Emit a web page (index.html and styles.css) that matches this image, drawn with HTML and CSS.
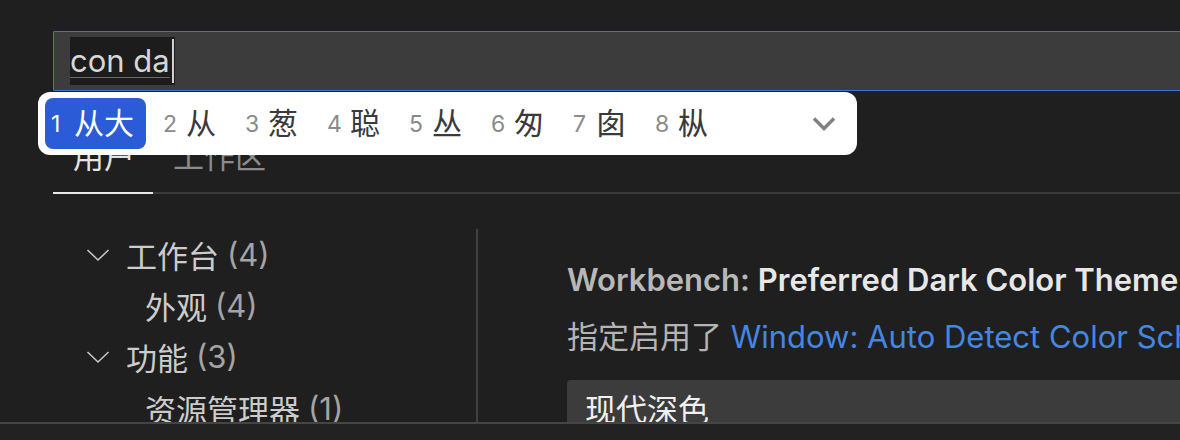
FILE: index.html
```html
<!DOCTYPE html>
<html lang="zh-CN">
<head>
<meta charset="utf-8">
<title>设置</title>
<link rel="stylesheet" href="styles.css">
</head>
<body>
<div class="page">
  <div class="search">
    <span class="preedit"><span class="preedit-text">con da</span><span class="caret"></span></span>
  </div>
  <div class="tabs">
    <div class="tab active">用户</div>
    <div class="tab">工作区</div>
  </div>
  <div class="main">
    <div class="tree">
      <div class="row"><svg class="twisty" width="24" height="24" viewBox="0 0 24 24"><polyline points="1.5,7 12,17 22.5,7" fill="none" stroke="#c5c5c5" stroke-width="1.6"/></svg><span class="label">工作台</span><span class="count">(4)</span></div>
      <div class="row sub"><span class="label">外观</span><span class="count">(4)</span></div>
      <div class="row"><svg class="twisty" width="24" height="24" viewBox="0 0 24 24"><polyline points="1.5,7 12,17 22.5,7" fill="none" stroke="#c5c5c5" stroke-width="1.6"/></svg><span class="label">功能</span><span class="count">(3)</span></div>
      <div class="row sub"><span class="label">资源管理器</span><span class="count">(1)</span></div>
    </div>
    <div class="divider"></div>
    <div class="content">
      <div class="setting-title"><span class="category">Workbench: </span>Preferred Dark Color Theme</div>
      <div class="setting-desc">指定启用了 <span class="link">Window: Auto Detect Color Scheme</span> 时首选的深色主题。</div>
      <div class="dropdown">现代深色</div>
    </div>
  </div>
</div>
<div class="footer"></div>

<div class="ime">
  <div class="cand selected"><span class="num">1</span><span class="chars">从大</span></div>
  <div class="cand"><span class="num">2</span><span class="chars">从</span></div>
  <div class="cand"><span class="num">3</span><span class="chars">葱</span></div>
  <div class="cand"><span class="num">4</span><span class="chars">聪</span></div>
  <div class="cand"><span class="num">5</span><span class="chars">丛</span></div>
  <div class="cand"><span class="num">6</span><span class="chars">匆</span></div>
  <div class="cand"><span class="num">7</span><span class="chars">囱</span></div>
  <div class="cand"><span class="num">8</span><span class="chars">枞</span></div>
  <svg class="more" width="26" height="18" viewBox="0 0 26 18"><polyline points="3,3.5 13,13.5 23,3.5" fill="none" stroke="#808080" stroke-width="3.4"/></svg>
</div>
</body>
</html>
```
FILE: styles.css
```css
html, body {
  margin: 0;
  padding: 0;
}
body {
  width: 1180px;
  height: 440px;
  overflow: hidden;
  background: #1f1f1f;
  font-family: Inter, "Noto Sans CJK SC", sans-serif;
  position: relative;
}
.page {
  height: 422px;
  box-sizing: border-box;
  padding: 31px 0 0 53px;
  display: flex;
  flex-direction: column;
  overflow: hidden;
}
.search {
  height: 58px;
  flex: none;
  border: 1px solid #3079d2;
  border-right: none;
  border-radius: 2px 0 0 2px;
  background: #3c3c3c;
  display: flex;
  align-items: center;
  padding-left: 16px;
  margin-right: -20px;
}
.preedit {
  display: flex;
  align-items: center;
  height: 48px;
  padding-right: 1px;
  background: #1c1c1c;
}
.preedit-text {
  font-size: 31px;
  line-height: 48px;
  color: #d6d6d6;
  text-decoration: underline;
  text-decoration-color: #6a6a6a;
  text-decoration-thickness: 1px;
  text-underline-offset: 5px;
}
.caret {
  width: 2px;
  height: 44px;
  margin-left: 2px;
  background: #d0d0d0;
}
.tabs {
  flex: none;
  display: flex;
  margin-top: 44px;
  border-bottom: 2px solid #3a3a3a;
}
.tab {
  font-size: 31px;
  line-height: 40px;
  padding: 0 20px 17px 20px;
  color: #8b8b8b;
  font-family: "Noto Sans CJK SC", sans-serif;
}
.tab.active {
  color: #e4e4e4;
  border-bottom: 2px solid #e7e7e7;
  margin-bottom: -2px;
  padding-right: 18px;
}
.main {
  flex: 1;
  min-height: 0;
  display: flex;
  margin-top: 35px;
}
.tree {
  width: 423px;
  flex: none;
  padding-top: 0;
}
.row {
  height: 51.3px;
  display: flex;
  align-items: center;
  padding-left: 33px;
  font-size: 31px;
  color: #cccccc;
  white-space: nowrap;
}
.row.sub {
  padding-left: 92px;
}
.twisty {
  flex: none;
  margin-right: 16px;
}
.label {
  font-family: "Noto Sans CJK SC", sans-serif;
  line-height: 40px;
}
.count {
  margin-left: 8px;
  color: #a4a4a4;
  line-height: 40px;
}
.divider {
  width: 2px;
  flex: none;
  background: #404040;
}
.content {
  flex: 1;
  min-width: 0;
  overflow: hidden;
  padding: 31px 0 0 89px;
  white-space: nowrap;
}
.setting-title {
  font-size: 31px;
  line-height: 40px;
  font-weight: 600;
  color: #e7e7e7;
}
.category {
  color: #b8b8b8;
}
.setting-desc {
  margin-top: 17px;
  font-size: 31px;
  line-height: 40px;
  color: #b4b4b4;
}
.link {
  color: #4387e3;
}
.dropdown {
  margin-top: 23px;
  width: 700px;
  height: 80px;
  box-sizing: border-box;
  padding: 8px 0 0 18px;
  background: #3c3c3c;
  border-radius: 4px;
  font-size: 31px;
  line-height: 40px;
  color: #f0f0f0;
  font-family: "Noto Sans CJK SC", sans-serif;
}
.footer {
  height: 18px;
  box-sizing: border-box;
  border-top: 2px solid #454545;
  background: #222222;
}
.ime {
  position: absolute;
  left: 38px;
  top: 92px;
  width: 819px;
  height: 63px;
  box-sizing: border-box;
  padding: 0 20px 0 7px;
  background: #ffffff;
  border-radius: 12px;
  display: flex;
  align-items: center;
  gap: 11px;
}
.cand {
  height: 51px;
  display: flex;
  align-items: center;
  padding: 0 12px 0 6px;
  border-radius: 8px;
}
.cand.selected {
  background: #2b5bd6;
}
.num {
  width: 23px;
  font-size: 23px;
  color: #8a8a8a;
}
.chars {
  font-family: "Noto Sans CJK SC", sans-serif;
  font-size: 30px;
  color: #3a3a3a;
  line-height: 40px;
  margin-top: -6px;
}
.cand.selected .num,
.cand.selected .chars {
  color: #ffffff;
}
.more {
  margin-left: auto;
  flex: none;
}
```
